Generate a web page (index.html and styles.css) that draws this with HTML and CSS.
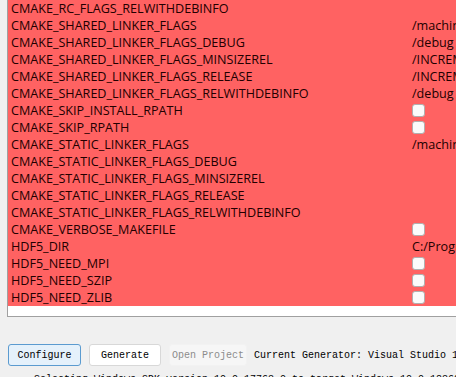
FILE: index.html
```
<!DOCTYPE html>
<html>
<head>
<meta charset="utf-8">
<link rel="stylesheet" href="styles.css">
</head>
<body>
<div class="app">
  <div class="table">
    <div class="rows">
      <div class="row"><span class="name">CMAKE_RC_FLAGS_RELWITHDEBINFO</span><span class="val"></span></div>
      <div class="row"><span class="name">CMAKE_SHARED_LINKER_FLAGS</span><span class="val">/machine:x64</span></div>
      <div class="row"><span class="name">CMAKE_SHARED_LINKER_FLAGS_DEBUG</span><span class="val">/debug /INCREMENTAL</span></div>
      <div class="row"><span class="name">CMAKE_SHARED_LINKER_FLAGS_MINSIZEREL</span><span class="val">/INCREMENTAL:NO</span></div>
      <div class="row"><span class="name">CMAKE_SHARED_LINKER_FLAGS_RELEASE</span><span class="val">/INCREMENTAL:NO</span></div>
      <div class="row"><span class="name">CMAKE_SHARED_LINKER_FLAGS_RELWITHDEBINFO</span><span class="val">/debug /INCREMENTAL</span></div>
      <div class="row"><span class="name">CMAKE_SKIP_INSTALL_RPATH</span><span class="val"><span class="check"></span></span></div>
      <div class="row"><span class="name">CMAKE_SKIP_RPATH</span><span class="val"><span class="check"></span></span></div>
      <div class="row"><span class="name">CMAKE_STATIC_LINKER_FLAGS</span><span class="val">/machine:x64</span></div>
      <div class="row"><span class="name">CMAKE_STATIC_LINKER_FLAGS_DEBUG</span><span class="val"></span></div>
      <div class="row"><span class="name">CMAKE_STATIC_LINKER_FLAGS_MINSIZEREL</span><span class="val"></span></div>
      <div class="row"><span class="name">CMAKE_STATIC_LINKER_FLAGS_RELEASE</span><span class="val"></span></div>
      <div class="row"><span class="name">CMAKE_STATIC_LINKER_FLAGS_RELWITHDEBINFO</span><span class="val"></span></div>
      <div class="row"><span class="name">CMAKE_VERBOSE_MAKEFILE</span><span class="val"><span class="check"></span></span></div>
      <div class="row"><span class="name">HDF5_DIR</span><span class="val">C:/Program Files/HDF_Group</span></div>
      <div class="row"><span class="name">HDF5_NEED_MPI</span><span class="val"><span class="check"></span></span></div>
      <div class="row"><span class="name">HDF5_NEED_SZIP</span><span class="val"><span class="check"></span></span></div>
      <div class="row"><span class="name">HDF5_NEED_ZLIB</span><span class="val"><span class="check"></span></span></div>
    </div>
  </div>
  <div class="actions">
    <button class="btn focused">Configure</button>
    <button class="btn plain">Generate</button>
    <button class="btn disabled">Open Project</button>
    <span class="gen">Current Generator: Visual Studio 16 2019</span>
  </div>
  <div class="log">Selecting Windows SDK version 10.0.17763.0 to target Windows 10.0.18362.</div>
</div>
</body>
</html>
```
FILE: styles.css
```
html, body {
  margin: 0;
  padding: 0;
  width: 456px;
  height: 377px;
  overflow: hidden;
  background: #f0f0f0;
}
.app {
  display: flex;
  flex-direction: column;
  width: 456px;
}
.table {
  margin-left: 7px;
  width: 520px;
  height: 316px;
  background: #ffffff;
  border-left: 1px solid #a0a0a0;
  border-bottom: 1px solid #a0a0a0;
  overflow: hidden;
}
.rows {
  display: flex;
  flex-direction: column;
}
.row {
  display: grid;
  grid-template-columns: 403px 1fr;
  height: 17px;
  background: #ff6262;
  font-family: "Open Sans", sans-serif;
  font-size: 12.6px;
  line-height: 17px;
  color: #220000;
  white-space: nowrap;
}
.name {
  padding-left: 3px;
  overflow: hidden;
}
.val {
  display: flex;
  align-items: center;
  padding-left: 1px;
  overflow: hidden;
}
.check {
  display: block;
  width: 11px;
  height: 11px;
  background: #fbfbfb;
  border: 1px solid #b0b0b0;
  border-radius: 3px;
}
.actions {
  display: flex;
  align-items: center;
  gap: 8px;
  margin-top: 27px;
  padding-left: 8px;
  white-space: nowrap;
}
.btn {
  flex-shrink: 0;
  height: 22px;
  padding: 0;
  font-family: "Liberation Mono", monospace;
  font-size: 10px;
  color: #000;
  background: #ffffff;
  border: 1px solid #d8d8d8;
  border-radius: 3px;
}
.btn.focused {
  width: 73px;
  background: #e5f1fb;
  border: 1px solid #5b9bd0;
}
.btn.plain {
  width: 72px;
}
.btn.disabled {
  width: 78px;
  background: #f6f6f6;
  border-color: #f2f2f2;
  color: #8c8c8c;
}
.gen {
  flex-shrink: 0;
  margin-left: -1px;
  font-family: "Liberation Mono", monospace;
  font-size: 10px;
  color: #000;
}
.log {
  margin-top: 8px;
  padding-left: 34px;
  font-family: "Liberation Mono", monospace;
  font-size: 10px;
  color: #000;
  white-space: nowrap;
}
```
